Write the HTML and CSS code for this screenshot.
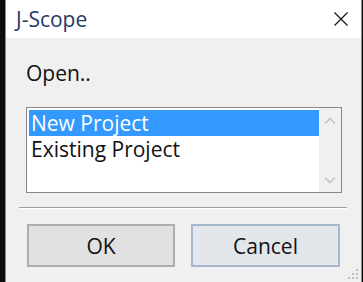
FILE: index.html
```html
<!DOCTYPE html>
<html>
<head>
<meta charset="utf-8">
<link rel="stylesheet" href="styles.css">
</head>
<body>
<div class="window">
  <div class="titlebar">
    <span class="title">J-Scope</span>
    <svg class="close" width="14" height="14" viewBox="0 0 14 14"><path d="M0.5 0.5 L13.5 13.5 M13.5 0.5 L0.5 13.5" stroke="#1a1a1a" stroke-width="1.3" fill="none"/></svg>
  </div>
  <div class="content">
    <div class="label">Open..</div>
    <div class="listbox">
      <div class="items">
        <div class="item selected">New Project</div>
        <div class="item">Existing Project</div>
      </div>
      <div class="scrollbar">
        <svg width="12" height="8" viewBox="0 0 12 8"><path d="M1 6.5 L6 1.5 L11 6.5" stroke="#c2c2c2" stroke-width="1.6" fill="none"/></svg>
        <svg width="12" height="8" viewBox="0 0 12 8"><path d="M1 1.5 L6 6.5 L11 1.5" stroke="#c2c2c2" stroke-width="1.6" fill="none"/></svg>
      </div>
    </div>
    <div class="separator"></div>
    <div class="buttons">
      <button class="btn">OK</button>
      <button class="btn btn-focus">Cancel</button>
    </div>
    <svg class="grip" width="12" height="12" viewBox="0 0 12 12">
      <g fill="#bdbdbd">
        <rect x="9" y="0" width="2" height="2"/>
        <rect x="5" y="4" width="2" height="2"/><rect x="9" y="4" width="2" height="2"/>
        <rect x="1" y="8" width="2" height="2"/><rect x="5" y="8" width="2" height="2"/><rect x="9" y="8" width="2" height="2"/>
      </g>
    </svg>
  </div>
</div>
</body>
</html>
```
FILE: styles.css
```css
* { box-sizing: border-box; }
html, body {
  margin: 0;
  padding: 0;
  width: 363px;
  height: 282px;
  overflow: hidden;
  background: #0c0c0c;
}
body {
  font-family: "Open Sans", "Noto Sans", sans-serif;
}
.window {
  margin-left: 5px;
  width: 357px;
  height: 282px;
  border-left: 1px solid #8a8a8a;
  border-right: 1px solid #8a8a8a;
  display: flex;
  flex-direction: column;
  background: #f0f0f0;
}
.titlebar {
  height: 38px;
  background: #ffffff;
  display: flex;
  align-items: center;
  justify-content: space-between;
  padding: 0 13px 0 10px;
  flex-shrink: 0;
}
.title {
  font-size: 21px;
  color: #1f3a66;
  margin-top: 0;
}
.close {
  display: block;
  margin-top: -1px;
}
.content {
  flex: 1;
  position: relative;
  padding: 0 0 0 20px;
}
.label {
  font-size: 21px;
  color: #111;
  margin: 22px 0 0 0;
  line-height: 26px;
  height: 26px;
}
.listbox {
  margin: 21px 0 0 0;
  width: 316px;
  height: 86px;
  border: 1px solid #828790;
  background: #fff;
  display: flex;
  padding: 2px 0 2px 2px;
}
.items {
  flex: 1;
}
.item {
  height: 26px;
  line-height: 26px;
  font-size: 21px;
  color: #111;
  padding-left: 2px;
  white-space: nowrap;
}
.item.selected {
  background: #3399ff;
  color: #fff;
}
.scrollbar {
  width: 22px;
  background: #f0f0f0;
  margin-top: -2px;
  margin-bottom: -2px;
  display: flex;
  flex-direction: column;
  align-items: center;
  justify-content: space-between;
  padding: 9px 0 8px;
}
.scrollbar svg { display: block; }
.separator {
  margin: 14px 0 0 -7px;
  width: 328px;
  height: 2px;
  border-top: 1px solid #a0a0a0;
  border-bottom: 1px solid #ffffff;
}
.buttons {
  display: flex;
  gap: 16px;
  margin-top: 15px;
  padding-left: 1px;
}
.btn {
  width: 148px;
  height: 43px;
  font-family: "Open Sans", "Noto Sans", sans-serif;
  font-size: 21px;
  color: #111;
  background: #e1e1e1;
  border: 2px solid #adadad;
  padding: 0;
}
.btn-focus {
  width: 149px;
  background: #e3e7eb;
  border-color: #a5b8cb;
}
.grip {
  position: absolute;
  right: 2px;
  bottom: 1px;
}
```
